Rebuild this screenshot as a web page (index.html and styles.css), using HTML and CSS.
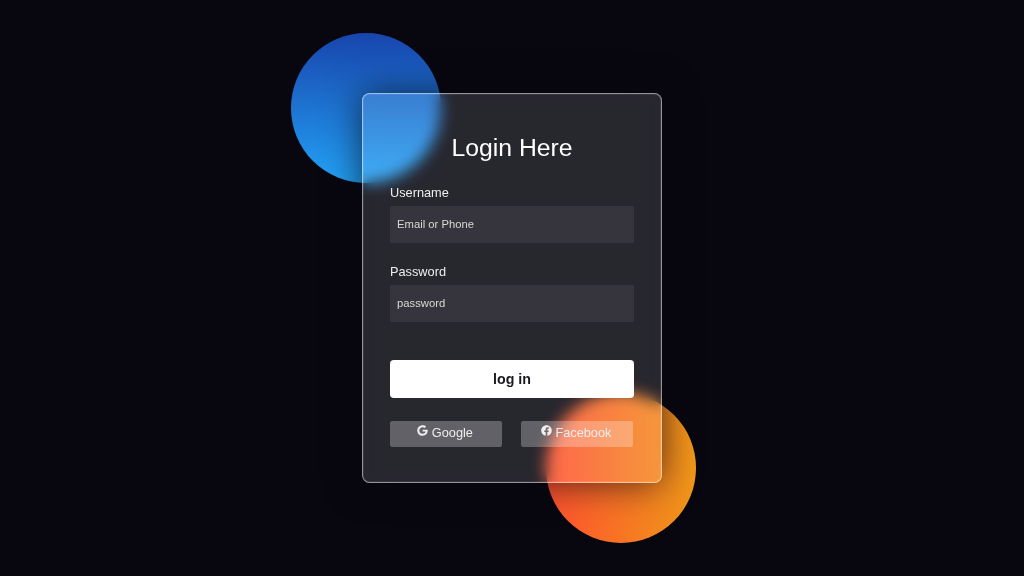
FILE: index.html
```html
<!DOCTYPE html>
<html lang="en">
<head>
    <meta charset="UTF-8">
    <meta name="viewport" content="width=device-width, initial-scale=1.0">
    <title>Login</title>
    <link rel="stylesheet" href="styles.css">
</head>
<body>
    <div class="background">
        <div class="shape shape-blue"></div>
        <div class="shape shape-orange"></div>
    </div>
    <form class="login-form">
        <h3>Login Here</h3>
        <label for="username">Username</label>
        <input type="text" id="username" placeholder="Email or Phone">
        <label for="password">Password</label>
        <input type="password" id="password" placeholder="password">
        <button type="button">log in</button>
        <div class="social">
            <div class="social-btn">
                <svg class="icon icon-google" viewBox="0 0 488 512"><path d="M488 261.8C488 403.3 391.1 504 248 504 110.8 504 0 393.2 0 256S110.8 8 248 8c66.8 0 123 24.5 166.3 64.9l-67.5 64.9C258.5 52.6 94.3 116.6 94.3 256c0 86.5 69.1 156.6 153.7 156.6 98.2 0 135-70.4 140.8-106.9H248v-85.3h236.1c2.3 12.7 3.9 24.9 3.9 41.4z"/></svg>
                <span>Google</span>
            </div>
            <div class="social-btn">
                <svg class="icon icon-facebook" viewBox="0 0 512 512"><path d="M504 256C504 119 393 8 256 8S8 119 8 256c0 123.78 90.69 226.38 209.25 245V327.69h-63V256h63v-54.64c0-62.15 37-96.48 93.67-96.48 27.14 0 55.52 4.84 55.52 4.84v61h-31.28c-30.8 0-40.41 19.12-40.41 38.73V256h68.78l-11 71.69h-57.78V501C413.31 482.38 504 379.78 504 256z"/></svg>
                <span>Facebook</span>
            </div>
        </div>
    </form>
</body>
</html>
```
FILE: styles.css
```css
* {
    box-sizing: border-box;
    margin: 0;
    padding: 0;
}
body {
    font-family: 'Liberation Sans', Arial, sans-serif;
    background-color: #080710;
    height: 100vh;
    overflow: hidden;
    display: flex;
    justify-content: center;
    align-items: center;
}
.background {
    position: absolute;
    width: 405px;
    height: 510px;
    left: 291px;
    top: 33px;
}
.shape {
    position: absolute;
    width: 150px;
    height: 150px;
    border-radius: 50%;
}
.shape-blue {
    left: 0;
    top: 0;
    background: linear-gradient(#1845ad, #23a2f6);
}
.shape-orange {
    right: 0;
    bottom: 0;
    background: linear-gradient(to right, #ff512f, #f09819);
}
.login-form {
    position: relative;
    width: 300px;
    height: 390px;
    padding: 38px 27px;
    background-color: rgba(255, 255, 255, 0.13);
    backdrop-filter: blur(7.5px);
    border: 1px solid rgba(255, 255, 255, 0.5);
    border-radius: 7.5px;
    box-shadow: 0 0 36px rgba(8, 7, 16, 0.7), inset 0 0 0 1px rgba(255, 255, 255, 0.08);
    color: #fff;
}
h3 {
    font-size: 24.75px;
    font-weight: 500;
    line-height: 31.5px;
    text-align: center;
}
label {
    display: block;
    margin-top: 22.5px;
    font-size: 12.75px;
    font-weight: 500;
    line-height: 13.5px;
    color: #eee;
}
input {
    display: block;
    width: 100%;
    height: 37.25px;
    margin-top: 6px;
    padding: 0 7px;
    background-color: rgba(255, 255, 255, 0.07);
    border: none;
    border-radius: 2.25px;
    color: #fff;
    font-family: inherit;
    font-size: 11.25px;
}
input::placeholder {
    color: #d8d8d8;
}
button {
    display: block;
    width: 100%;
    height: 38px;
    margin-top: 38px;
    background-color: #fff;
    border: none;
    border-radius: 3.75px;
    color: #1b1a22;
    font-family: inherit;
    font-size: 14.25px;
    font-weight: 600;
    cursor: pointer;
}
.social {
    display: flex;
    gap: 19px;
    margin-top: 23px;
}
.social-btn {
    display: flex;
    justify-content: center;
    align-items: center;
    gap: 3.75px;
    width: 112px;
    height: 26px;
    padding-right: 2px;
    background-color: rgba(255, 255, 255, 0.27);
    border-radius: 2.25px;
    font-size: 12.75px;
    color: #eee;
}
.social-btn span {
    margin-top: -3px;
}
.icon {
    width: 11px;
    height: 11px;
    margin-top: -7px;
    fill: #eee;
}
```
